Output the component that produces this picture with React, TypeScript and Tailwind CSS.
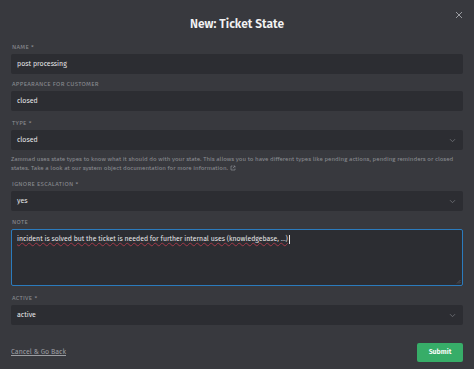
import React from "react";

const font = { fontFamily: '"Fira Sans","Noto Sans","Open Sans",sans-serif' };

function Chevron() {
  return (
    <svg width="7" height="5" viewBox="0 0 7 5" className="text-[#6b6d73]">
      <path d="M1 1.2l2.5 2.5 2.5-2.5" fill="none" stroke="currentColor" strokeWidth="0.9" />
    </svg>
  );
}

function Label({ children }: { children: React.ReactNode }) {
  return (
    <div className="text-[6.2px] leading-[8px] tracking-[0.3px] text-[#8b8d92] uppercase px-[1px] mb-[3px]">
      {children}
    </div>
  );
}

function Field({ value, select }: { value: string; select?: boolean }) {
  return (
    <div className="h-[20px] bg-[#2c2d32] rounded-[2px] flex items-center justify-between pl-[6px] pr-[7px] text-[7px] text-[#e6e6e8]">
      <span>{value}</span>
      {select && <Chevron />}
    </div>
  );
}

export default function App() {
  return (
    <div className="w-[474px] h-[369px] bg-[#38393e] relative overflow-hidden" style={font}>
      <div className="absolute right-[11px] top-[11px] text-[#9a9ca1]">
        <svg width="8" height="8" viewBox="0 0 8 8">
          <path d="M1 1l6 6M7 1L1 7" stroke="currentColor" strokeWidth="1" />
        </svg>
      </div>
      <div className="px-[11px] pt-[16px]">
        <h1 className="text-center text-[12px] leading-[16px] font-semibold text-[#f2f2f3] mb-[11px]">
          New: Ticket State
        </h1>
        <Label>Name *</Label>
        <Field value="post processing" />
        <div className="h-[6px]" />
        <Label>Appearance for customer</Label>
        <Field value="closed" />
        <div className="h-[8px]" />
        <Label>Type *</Label>
        <Field value="closed" select />
        <p className="text-[6.2px] leading-[9px] text-[#8b8d92] mt-[5px] whitespace-nowrap">
          Zammad uses state types to know what it should do with your state. This allows you to have different types like pending actions, pending reminders or closed
          <br />
          states. Take a look at our system object documentation for more information.{" "}
          <span className="inline-block align-middle">
            <svg width="6" height="6" viewBox="0 0 6 6">
              <path d="M2.5 1H1v4h4V3.5M3.5 1H5v1.5M5 1L2.8 3.2" fill="none" stroke="#8b8d92" strokeWidth="0.7" />
            </svg>
          </span>
        </p>
        <div className="h-[7px]" />
        <Label>Ignore Escalation *</Label>
        <Field value="yes" select />
        <div className="h-[7px]" />
        <Label>Note</Label>
        <div className="h-[57px] bg-[#2c2d32] border border-[#2b7bbd] rounded-[2px] relative px-[5px] pt-[4px] text-[6.9px] leading-[10px] text-[#e6e6e8]">
          <span className="underline decoration-wavy decoration-[#a33a4a] decoration-[0.5px] underline-offset-[1px]">
            incident is solved but the ticket is needed for further internal uses (knowledgebase, ...)
          </span>
          <span className="inline-block w-[1px] h-[9px] bg-[#e6e6e8] align-middle ml-[1px]" />
          <svg className="absolute right-[1px] bottom-[1px]" width="5" height="5" viewBox="0 0 5 5">
            <path d="M4.5 1L1 4.5M4.5 3L3 4.5" stroke="#6b6d73" strokeWidth="0.6" />
          </svg>
        </div>
        <div className="h-[8px]" />
        <Label>Active *</Label>
        <Field value="active" select />
        <div className="flex items-center justify-between mt-[18px]">
          <a className="text-[7px] text-[#9c9ea3] underline underline-offset-[1px]">Cancel &amp; Go Back</a>
          <button className="w-[46px] h-[19px] bg-[#37ad68] rounded-[2px] text-[7px] font-semibold text-white">
            Submit
          </button>
        </div>
      </div>
    </div>
  );
}
